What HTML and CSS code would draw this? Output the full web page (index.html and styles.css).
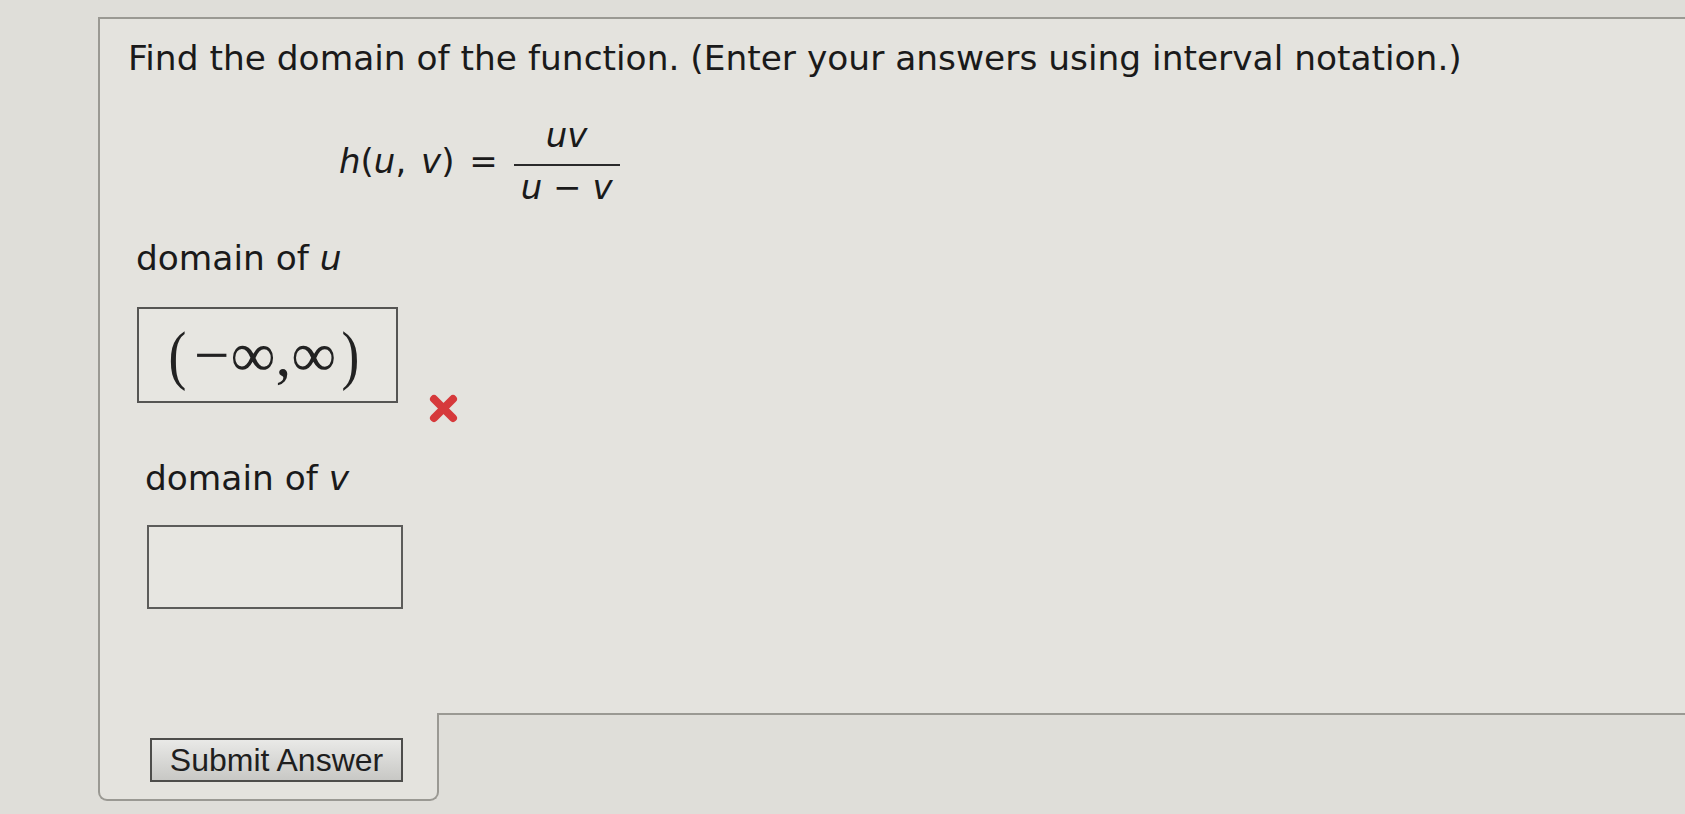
FILE: index.html
```html
<!DOCTYPE html>
<html lang="en">
<head>
<meta charset="utf-8">
<title>Find the domain of the function</title>
<link rel="stylesheet" href="styles.css">
</head>
<body>
<div class="screen">
  <div class="question">
    <p class="prompt">Find the domain of the function. (Enter your answers using interval notation.)</p>
    <div class="formula">
      <span class="lhs"><i>h</i>(<i>u</i>, <i>v</i>) =</span>
      <span class="frac">
        <span class="num"><i>uv</i></span>
        <span class="bar"></span>
        <span class="den"><i>u</i> &minus; <i>v</i></span>
      </span>
    </div>
    <p class="label label-u">domain of <i>u</i></p>
    <div class="answer-row">
      <div class="answer answer-filled"><span class="paren">(</span><span class="minus">&minus;</span><span>&infin;,&infin;</span><span class="paren paren-close">)</span></div>
      <svg class="wrong" viewBox="0 0 33 33" aria-label="incorrect">
        <path d="M7 7 L26 26 M26 7 L7 26" />
      </svg>
    </div>
    <p class="label label-v">domain of <i>v</i></p>
    <div class="answer answer-empty"></div>
  </div>
  <div class="footer">
    <div class="tab"><button class="submit" type="button">Submit Answer</button></div>
    <div class="rest"></div>
  </div>
</div>
</body>
</html>
```
FILE: styles.css
```css
html, body {
  margin: 0;
  padding: 0;
}

body {
  background: #dfded9;
  font-family: "DejaVu Sans", Verdana, sans-serif;
  color: #1a1a1a;
}

.screen {
  height: 814px;
  box-sizing: border-box;
  padding: 17px 0 0 98px;
  overflow: hidden;
}

.question {
  background: #e4e3de;
  border-top: 2px solid #9a9993;
  border-left: 2px solid #9a9993;
  padding: 19px 0 104px 0;
}

.prompt {
  margin: 0 0 0 28px;
  font-size: 34.4px;
  line-height: 40px;
  white-space: nowrap;
}

.formula {
  display: flex;
  align-items: center;
  margin: 40px 0 0 239px;
  font-size: 34px;
}

.lhs {
  line-height: 40px;
  margin-right: 16px;
  word-spacing: 4px;
  white-space: pre;
}

.frac {
  display: flex;
  flex-direction: column;
  align-items: center;
}

.num,
.den {
  line-height: 34px;
  padding: 0 7px;
  white-space: pre;
}

.num {
  margin-bottom: 12px;
}

.bar {
  align-self: stretch;
  height: 2px;
  background: #2a2a2a;
  margin-bottom: 4px;
}

.label {
  font-size: 34.4px;
  line-height: 40px;
  margin: 0;
}

.label-u {
  margin: 34px 0 0 36px;
}

.label-v {
  margin: 33px 0 0 45px;
}

.answer-row {
  display: flex;
  align-items: flex-start;
  margin: 29px 0 0 37px;
}

.answer {
  box-sizing: border-box;
  background: #e7e6e1;
}

.answer-filled {
  width: 261px;
  height: 96px;
  border: 2px solid #555553;
  display: flex;
  align-items: center;
  padding-left: 28px;
  font-family: "Liberation Serif", "Times New Roman", serif;
  font-size: 63px;
  line-height: 1;
  color: #222;
}

.paren {
  display: inline-block;
  transform: scale(0.85, 1.05);
}

.minus {
  margin: 0 1px 0 6px;
}

.paren-close {
  margin-left: 4px;
}

.wrong {
  width: 33px;
  height: 33px;
  margin: 85px 0 0 29px;
  fill: none;
  stroke: #d6393b;
  stroke-width: 8;
  stroke-linecap: round;
}

.answer-empty {
  width: 256px;
  height: 84px;
  border: 2px solid #5c5c5a;
  margin: 27px 0 0 47px;
}

.footer {
  display: flex;
  align-items: flex-start;
}

.tab {
  box-sizing: border-box;
  width: 341px;
  height: 88px;
  background: #e4e3de;
  border: 2px solid #9a9993;
  border-top: none;
  border-radius: 0 0 9px 9px;
  padding: 25px 0 0 50px;
}

.rest {
  flex: 1;
  border-top: 2px solid #9a9993;
}

.submit {
  display: block;
  box-sizing: border-box;
  width: 253px;
  height: 44px;
  margin: 0;
  padding: 0;
  font-family: "Liberation Sans", Arial, sans-serif;
  font-size: 32px;
  color: #1e1e1e;
  border: 2px solid #4d4d4b;
  border-radius: 0;
  background: linear-gradient(#e9e9e7, #c8c8c5);
}
```
